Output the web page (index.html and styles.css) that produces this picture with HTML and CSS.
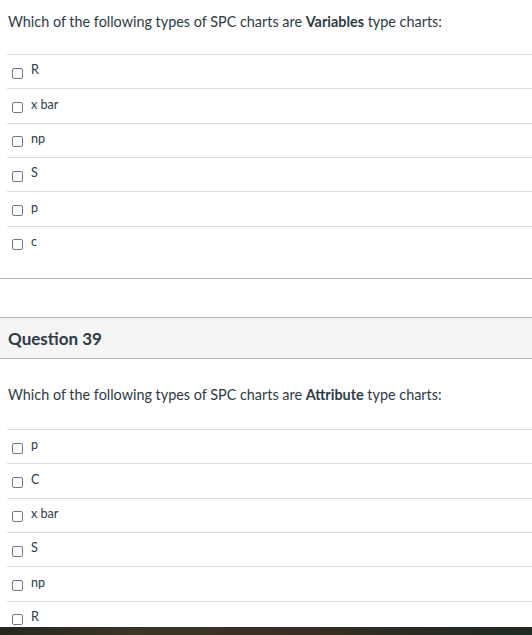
FILE: index.html
```html
<!DOCTYPE html>
<html>
<head>
<meta charset="utf-8">
<link rel="stylesheet" href="styles.css">
</head>
<body>
<div class="question">
  <p class="qtext">Which of the following types of SPC charts are <strong>Variables</strong> type charts:</p>
  <ul class="answers">
    <li class="answer"><span class="box"></span><span class="label">R</span></li>
    <li class="answer"><span class="box"></span><span class="label">x bar</span></li>
    <li class="answer"><span class="box"></span><span class="label">np</span></li>
    <li class="answer"><span class="box"></span><span class="label">S</span></li>
    <li class="answer"><span class="box"></span><span class="label">p</span></li>
    <li class="answer"><span class="box"></span><span class="label">c</span></li>
  </ul>
</div>
<div class="divider"></div>
<div class="qheader"><h2>Question 39</h2></div>
<div class="question">
  <p class="qtext q2">Which of the following types of SPC charts are <strong>Attribute</strong> type charts:</p>
  <ul class="answers">
    <li class="answer"><span class="box"></span><span class="label">p</span></li>
    <li class="answer"><span class="box"></span><span class="label">C</span></li>
    <li class="answer"><span class="box"></span><span class="label">x bar</span></li>
    <li class="answer"><span class="box"></span><span class="label">S</span></li>
    <li class="answer"><span class="box"></span><span class="label">np</span></li>
    <li class="answer"><span class="box"></span><span class="label">R</span></li>
  </ul>
</div>
<div class="footer-band"></div>
</body>
</html>
```
FILE: styles.css
```css
html, body {
  margin: 0;
  padding: 0;
  background: #ffffff;
  height: 635px;
  overflow: hidden;
}
body {
  font-family: Lato, "Liberation Sans", sans-serif;
  color: #2d3b45;
  position: relative;
}
.qtext {
  margin: 0;
  padding: 12px 0 0 8px;
  height: 54px;
  box-sizing: border-box;
  font-size: 14.4px;
  line-height: 20px;
}
.qtext strong {
  font-weight: 700;
}
.qtext.q2 {
  padding-top: 26px;
  height: 70px;
}
.answers {
  list-style: none;
  margin: 0 0 0 7px;
  padding: 0;
}
.answer {
  border-top: 1px solid #dcdcdc;
  height: 33.35px;
  display: flex;
  align-items: center;
  font-size: 12.6px;
}
.box {
  width: 9px;
  height: 9px;
  border: 1px solid #767676;
  border-radius: 2px;
  margin: 3px 8px 0 5px;
  flex: none;
}
.label {
  line-height: 16px;
  margin-top: -3px;
}
.divider {
  height: 0;
  border-top: 1px solid #b4b4b4;
  margin-top: 18px;
}
.qheader {
  margin-top: 38px;
  height: 40px;
  background: #f5f5f5;
  border-top: 1px solid #b4b4b4;
  border-bottom: 1px solid #b4b4b4;
  display: flex;
  align-items: center;
}
.qheader h2 {
  margin: 0 0 0 8px;
  font-size: 17px;
  font-weight: 700;
  color: #2d3b45;
}
.footer-band {
  position: absolute;
  left: 0;
  right: 0;
  top: 627px;
  height: 8px;
  background: linear-gradient(90deg, #25261f 0%, #3a3526 25%, #3a2e22 55%, #2b2c24 75%, #1f2a22 100%);
}
```
